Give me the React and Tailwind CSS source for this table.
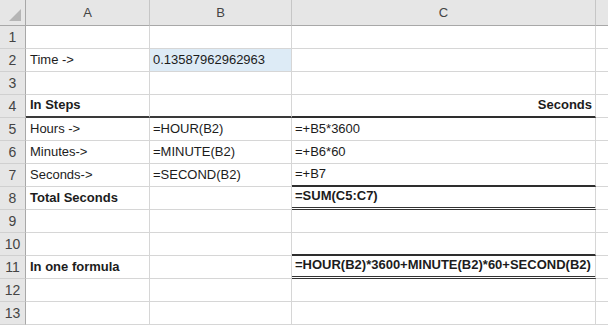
const rows = [
  { n: 1 },
  { n: 2, a: 'Time ->', b: '0.13587962962963', bSel: true },
  { n: 3 },
  { n: 4, a: 'In Steps', c: 'Seconds', bold: true, cRight: true, heavy: true },
  { n: 5, a: 'Hours ->', b: '=HOUR(B2)', c: '=+B5*3600' },
  { n: 6, a: 'Minutes->', b: '=MINUTE(B2)', c: '=+B6*60' },
  { n: 7, a: 'Seconds->', b: '=SECOND(B2)', c: '=+B7', cUnder: true },
  { n: 8, a: 'Total Seconds', c: '=SUM(C5:C7)', bold: true, cTotal: true },
  { n: 9 },
  { n: 10, cUnder: true },
  { n: 11, a: 'In one formula', c: '=HOUR(B2)*3600+MINUTE(B2)*60+SECOND(B2)', bold: true, cTotal: true },
  { n: 12 },
  { n: 13 },
];

const cell = 'flex h-[23px] items-end overflow-hidden whitespace-nowrap border-r border-b border-[#d6d6d6] pb-[2px]';

function Corner() {
  return (
    <div className="relative h-[26px] w-[26px] border-r border-b border-[#a8a8a8] bg-[#e6e6e6]">
      <svg className="absolute left-[8px] top-[8px]" width="14" height="14" viewBox="0 0 14 14">
        <polygon points="13,1 13,13 1,13" fill="#b5b5b5" />
      </svg>
    </div>
  );
}

function ColHead({ label, w }) {
  return (
    <div
      className={`flex h-[26px] items-center justify-center border-r border-b border-r-[#c6c6c6] border-b-[#a8a8a8] bg-[#e6e6e6] pt-[1px] text-[13px] text-[#444] ${w}`}
    >
      {label}
    </div>
  );
}

export default function App() {
  return (
    <div
      className="h-[325px] w-[608px] overflow-hidden bg-white text-[13px] text-[#1c1c1c]"
      style={{ fontFamily: '"Liberation Sans", Arial, sans-serif' }}
    >
      <div className="flex">
        <Corner />
        <ColHead label="A" w="w-[124px]" />
        <ColHead label="B" w="w-[142px]" />
        <ColHead label="C" w="w-[304px]" />
        <div className="h-[26px] flex-1 border-b border-[#a8a8a8] bg-[#e6e6e6]" />
      </div>

      {rows.map((r) => (
        <div key={r.n} className="flex">
          <div className="flex h-[23px] w-[26px] items-center justify-center border-r border-b border-r-[#a8a8a8] border-b-[#d0d0d0] bg-[#e6e6e6] pt-[1px] text-[14px] text-[#444]">
            {r.n}
          </div>
          <div
            className={`${cell} w-[124px] pl-[4px] ${r.bold ? 'font-bold' : ''} ${
              r.heavy ? 'border-b-2 border-b-[#3a3a3a]' : ''
            }`}
          >
            {r.a}
          </div>
          <div
            className={`${cell} w-[142px] pl-[3px] ${r.bSel ? 'bg-[#ddebf6]' : ''} ${
              r.heavy ? 'border-b-2 border-b-[#3a3a3a]' : ''
            }`}
          >
            {r.b}
          </div>
          <div
            className={`${cell} w-[304px] pl-[3px] pr-[3px] ${r.bold ? 'font-bold' : ''} ${
              r.cRight ? 'justify-end' : ''
            } ${r.heavy || r.cUnder ? 'border-b-2 border-b-[#2e2e2e]' : ''} ${
              r.cTotal ? 'border-b-[3px] border-double border-b-[#333]' : ''
            }`}
          >
            {r.c}
          </div>
          <div className="h-[23px] flex-1 border-b border-[#d6d6d6]" />
        </div>
      ))}
    </div>
  );
}
